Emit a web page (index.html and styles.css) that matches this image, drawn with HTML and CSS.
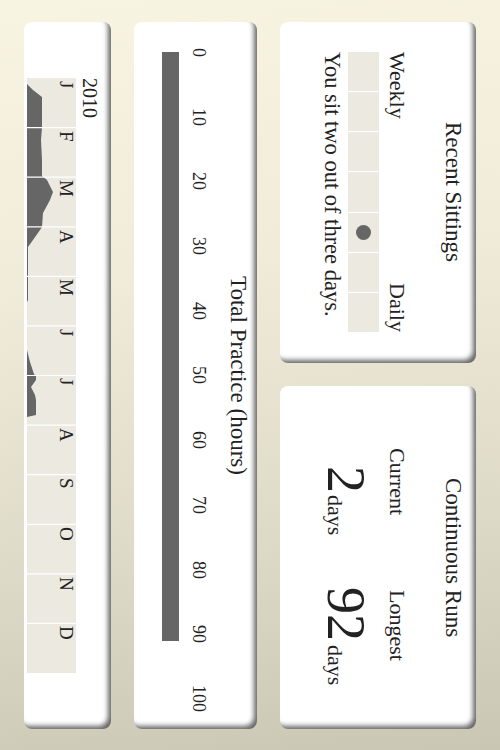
FILE: index.html
```html
<!DOCTYPE html>
<html>
<head>
<meta charset="utf-8">
<link rel="stylesheet" href="styles.css">
</head>
<body>
<div class="dashboard">
  <section class="panel sittings">
    <div class="title">Recent Sittings</div>
    <div class="scale-labels"><span>Weekly</span><span>Daily</span></div>
    <div class="cells">
      <div class="cell"></div>
      <div class="cell"></div>
      <div class="cell"></div>
      <div class="cell"></div>
      <div class="cell"><span class="dot"></span></div>
      <div class="cell"></div>
      <div class="cell"></div>
    </div>
    <div class="caption">You sit two out of three days.</div>
  </section>

  <section class="panel runs">
    <div class="title">Continuous Runs</div>
    <div class="stats">
      <div class="stat current">
        <div class="stat-label">Current</div>
        <div class="stat-value"><span class="num">2</span><span class="unit">days</span></div>
      </div>
      <div class="stat longest">
        <div class="stat-label">Longest</div>
        <div class="stat-value"><span class="num">92</span><span class="unit">days</span></div>
      </div>
    </div>
  </section>

  <section class="panel practice">
    <div class="title">Total Practice (hours)</div>
    <div class="axis">
      <span class="tick"><span>0</span></span>
      <span class="tick"><span>10</span></span>
      <span class="tick"><span>20</span></span>
      <span class="tick"><span>30</span></span>
      <span class="tick"><span>40</span></span>
      <span class="tick"><span>50</span></span>
      <span class="tick"><span>60</span></span>
      <span class="tick"><span>70</span></span>
      <span class="tick"><span>80</span></span>
      <span class="tick"><span>90</span></span>
      <span class="tick"><span>100</span></span>
    </div>
    <div class="track">
      <div class="seg"></div><div class="seg"></div><div class="seg"></div><div class="seg"></div><div class="seg"></div>
      <div class="seg"></div><div class="seg"></div><div class="seg"></div><div class="seg"></div><div class="seg"></div>
      <div class="bar" style="inline-size:92.5%"></div>
    </div>
  </section>

  <section class="panel year">
    <div class="year-label">2010</div>
    <div class="chart">
      <svg class="chart-svg" viewBox="0 0 49 595" width="49" height="595" preserveAspectRatio="none">
        <g transform="translate(49 0) rotate(90)">
          <rect x="0" y="0" width="595" height="49" fill="#ece9e1"/>
          <path fill="#666666" d="M6 49 L12 43 L19 34 L49 34 L62 35 L82 34 L98 34 L102 29 L114 23 L122 26 L135 33 L149 34 L152 36 L162 43 L169 48 L222 48 L224 49 L272 49 L284 46 L296 42 L298 40 L302 40 L309 45 L317 41 L322 40 L337 40 L339 49 Z"/>
          <g stroke="#ffffff" stroke-width="1.2">
            <line x1="49.6" y1="0" x2="49.6" y2="49"/>
            <line x1="99.2" y1="0" x2="99.2" y2="49"/>
            <line x1="148.8" y1="0" x2="148.8" y2="49"/>
            <line x1="198.3" y1="0" x2="198.3" y2="49"/>
            <line x1="247.9" y1="0" x2="247.9" y2="49"/>
            <line x1="297.5" y1="0" x2="297.5" y2="49"/>
            <line x1="347.1" y1="0" x2="347.1" y2="49"/>
            <line x1="396.7" y1="0" x2="396.7" y2="49"/>
            <line x1="446.3" y1="0" x2="446.3" y2="49"/>
            <line x1="495.8" y1="0" x2="495.8" y2="49"/>
            <line x1="545.4" y1="0" x2="545.4" y2="49"/>
          </g>
        </g>
      </svg>
      <div class="months">
        <span class="month">J</span><span class="month">F</span><span class="month">M</span>
        <span class="month">A</span><span class="month">M</span><span class="month">J</span>
        <span class="month">J</span><span class="month">A</span><span class="month">S</span>
        <span class="month">O</span><span class="month">N</span><span class="month">D</span>
      </div>
    </div>
  </section>
</div>
</body>
</html>
```

FILE: styles.css
```css
html, body {
  margin: 0;
  padding: 0;
  width: 500px;
  height: 750px;
  overflow: hidden;
}

body {
  background: linear-gradient(172deg, #f8f4e2 0%, #f1ecd9 35%, #dedac8 70%, #cac6b4 100%);
  font-family: "Liberation Serif", "Times New Roman", serif;
  color: #222222;
  writing-mode: vertical-rl;
  text-orientation: sideways;
}

/* Landscape dashboard shown on its side: inline axis runs down the screen,
   blocks stack from right to left. */
.dashboard {
  box-sizing: border-box;
  inline-size: 750px;
  block-size: 500px;
  padding-block: 24px 24px;
  padding-inline: 22px 21px;
  display: grid;
  grid-template-columns: 341px 343px;
  grid-template-rows: 196px 123px 87px;
  column-gap: 23px;
  row-gap: 23px;
}

.panel {
  box-sizing: border-box;
  background: #ffffff;
  border-radius: 8px;
  box-shadow: inset -4px -4px 5px -1px rgba(0, 0, 0, 0.6);
  display: flex;
  flex-direction: column;
}

.title {
  font-size: 23px;
  line-height: 1;
  text-align: center;
}

/* Recent Sittings */
.sittings {
  padding-block-start: 11px;
  padding-inline: 30px 31px;
}

.scale-labels {
  margin-block-start: 34px;
  display: flex;
  justify-content: space-between;
  font-size: 22px;
  line-height: 1;
  block-size: 22px;
}

.cells {
  margin-block-start: 7px;
  block-size: 31px;
  display: grid;
  grid-template-columns: repeat(7, 1fr);
  column-gap: 1px;
}

.cell {
  background: #ece9e1;
  display: flex;
  align-items: center;
  justify-content: center;
}

.dot {
  width: 15px;
  height: 15px;
  border-radius: 50%;
  background: #666666;
}

.caption {
  margin-block-start: 5px;
  font-size: 22.5px;
  line-height: 1;
}

/* Continuous Runs */
.runs {
  padding-block-start: 11px;
}

.stats {
  margin-block-start: 34px;
  padding-inline-start: 62px;
  display: grid;
  grid-template-columns: 142px 1fr;
}

.stat {
  display: flex;
  flex-direction: column;
}

.stat-label {
  font-size: 22px;
  line-height: 1;
  block-size: 22px;
}

.stat-value {
  margin-block-start: 13px;
  display: flex;
  align-items: baseline;
  line-height: 1;
}

.current .stat-value {
  margin-inline-start: 18px;
}

.longest .stat-value {
  margin-inline-start: -3px;
}

.num {
  font-size: 54px;
}

.unit {
  font-size: 22px;
  margin-inline-start: 2px;
}

.longest .unit {
  margin-inline-start: 4px;
}

/* Total Practice */
.practice {
  grid-column: 1 / -1;
  padding-block-start: 7px;
  padding-inline: 30px 30px;
}

.axis {
  margin-block-start: 19px;
  block-size: 18px;
  display: flex;
  justify-content: space-between;
  font-size: 18px;
  line-height: 1;
}

.tick {
  inline-size: 0;
  display: flex;
  justify-content: center;
  white-space: nowrap;
}

.track {
  block-size: 39px;
  display: grid;
  grid-template-columns: repeat(10, 1fr);
  column-gap: 1px;
}

.seg {
  grid-row: 1;
  background: #ece9e1;
}

.bar {
  grid-row: 1;
  grid-column: 1 / -1;
  justify-self: start;
  align-self: center;
  block-size: 17px;
  background: #666666;
}

/* Year chart */
.year {
  grid-column: 1 / -1;
  padding-block-start: 11px;
  padding-inline: 56px 56px;
}

.year-label {
  font-size: 20px;
  line-height: 1;
  block-size: 20px;
}

.chart {
  margin-block-start: 4px;
  block-size: 49px;
  display: grid;
}

.chart > * {
  grid-area: 1 / 1;
}

.chart-svg {
  display: block;
  width: 49px;
  height: 595px;
}

.months {
  display: grid;
  grid-template-columns: repeat(12, 1fr);
}

.month {
  padding-inline-start: 3px;
  font-size: 19px;
  line-height: 1;
}
```
